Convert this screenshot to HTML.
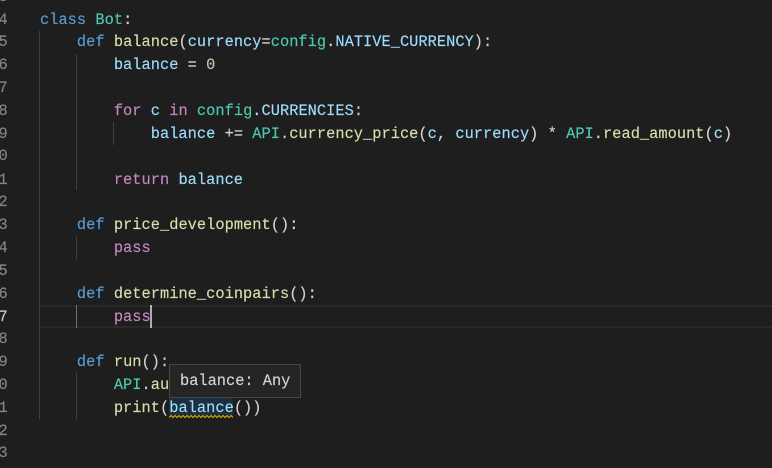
<!DOCTYPE html>
<html><head><meta charset="utf-8">
<style>
html,body{margin:0;padding:0;background:#1e1e1e}
#e{position:relative;width:772px;height:468px;overflow:hidden;background:#1e1e1e;font-family:"Liberation Mono",monospace;font-size:15.33px;letter-spacing:0.03px;color:#d4d4d4;-webkit-text-stroke:0.15px}
.l{position:absolute;left:40px;height:23px;line-height:23px;white-space:pre;margin-top:0.6px}
.n{position:absolute;left:-1.5px;height:23px;line-height:23px;color:#858585;margin-top:0.6px}
.g{position:absolute;width:1px;background:#404040}
.k{color:#569cd6}.c{color:#4ec9b0}.v{color:#9cdcfe}.f{color:#dcdcaa}.p{color:#c586c0}.m{color:#b5cea8}
</style></head><body><div id="e">
<div class="g" style="left:39px;top:31px;height:388px"></div>
<div class="g" style="left:76px;top:54px;height:136px"></div>
<div class="g" style="left:113px;top:122px;height:23px"></div>
<div class="g" style="left:76px;top:236px;height:23px"></div>
<div class="g" style="left:76px;top:373px;height:46px"></div>
<div style="position:absolute;left:40px;right:0;top:305px;height:19px;border-top:2px solid #282828;border-bottom:2px solid #282828"></div>
<div class="g" style="left:76px;top:305px;height:23px;background:#707070"></div>
<div style="position:absolute;left:150px;top:305px;width:2px;height:23px;background:#aeafad"></div>
<div style="position:absolute;left:169px;top:398px;width:64px;height:17px;background:#1d2e3d"></div>
<div class="n" style="top:-15px">3</div>
<div class="n" style="top:8px">4</div>
<div class="n" style="top:30.4px">5</div>
<div class="n" style="top:53.2px">6</div>
<div class="n" style="top:76px">7</div>
<div class="n" style="top:99px">8</div>
<div class="n" style="top:122px">9</div>
<div class="n" style="top:144.6px">0</div>
<div class="n" style="top:168px">1</div>
<div class="n" style="top:190.4px">2</div>
<div class="n" style="top:213.2px">3</div>
<div class="n" style="top:236px">4</div>
<div class="n" style="top:259px">5</div>
<div class="n" style="top:282px">6</div>
<div class="n" style="top:305px;color:#c6c6c6">7</div>
<div class="n" style="top:327.5px">8</div>
<div class="n" style="top:350.4px">9</div>
<div class="n" style="top:373.2px">0</div>
<div class="n" style="top:396px">1</div>
<div class="n" style="top:419px">2</div>
<div class="n" style="top:441.8px">3</div>
<div class="l" style="top:8px"><span class="k">class</span> <span class="c">Bot</span>:</div>
<div class="l" style="top:30.4px">    <span class="k">def</span> <span class="f">balance</span>(<span class="v">currency</span>=<span class="c">config</span>.<span class="v">NATIVE_CURRENCY</span>):</div>
<div class="l" style="top:53.2px">        <span class="v">balance</span> = <span class="m">0</span></div>
<div class="l" style="top:99px">        <span class="p">for</span> <span class="v">c</span> <span class="p">in</span> <span class="c">config</span>.<span class="v">CURRENCIES</span>:</div>
<div class="l" style="top:122px">            <span class="v">balance</span> += <span class="c">API</span>.<span class="f">currency_price</span>(<span class="v">c</span>, <span class="v">currency</span>) * <span class="c">API</span>.<span class="f">read_amount</span>(<span class="v">c</span>)</div>
<div class="l" style="top:168px">        <span class="p">return</span> <span class="v">balance</span></div>
<div class="l" style="top:213.2px">    <span class="k">def</span> <span class="f">price_development</span>():</div>
<div class="l" style="top:236px">        <span class="p">pass</span></div>
<div class="l" style="top:282px">    <span class="k">def</span> <span class="f">determine_coinpairs</span>():</div>
<div class="l" style="top:305px">        <span class="p">pass</span></div>
<div class="l" style="top:350.4px">    <span class="k">def</span> <span class="f">run</span>():</div>
<div class="l" style="top:373.2px">        <span class="c">API</span>.<span class="f">au</span></div>
<div class="l" style="top:396px">        <span class="f">print</span>(<span class="v">balance</span>())</div>
<svg style="position:absolute;left:169px;top:414px" width="64" height="5"><path d="M0 3.5L2 1.5L4 3.5L6 1.5L8 3.5L10 1.5L12 3.5L14 1.5L16 3.5L18 1.5L20 3.5L22 1.5L24 3.5L26 1.5L28 3.5L30 1.5L32 3.5L34 1.5L36 3.5L38 1.5L40 3.5L42 1.5L44 3.5L46 1.5L48 3.5L50 1.5L52 3.5L54 1.5L56 3.5L58 1.5L60 3.5L62 1.5L64 3.5" fill="none" stroke="#cca700" stroke-width="1.2"/></svg>
<div style="position:absolute;left:169px;top:364px;width:130px;height:32px;background:#252526;border:1px solid #454545;line-height:32px;white-space:pre;text-indent:10px;letter-spacing:0">balance: Any</div>
</div></body></html>
